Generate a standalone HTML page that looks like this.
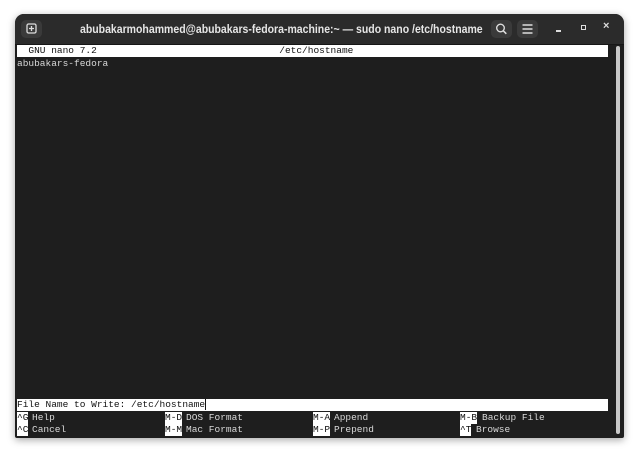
<!DOCTYPE html>
<html><head><style>
html,body{margin:0;padding:0;width:640px;height:456px;background:#fff;overflow:hidden;font-family:"Liberation Sans",sans-serif}
.win{position:absolute;left:15px;top:14px;width:609px;height:424px;border-radius:9px 9px 2px 2px;background:#1e1e1e;box-shadow:0 2px 8px rgba(0,0,0,.35);overflow:hidden}
.hdr{position:absolute;left:0;top:0;width:609px;height:30px;background:#2b2b2b;border-bottom:1px solid #161616}
.title{position:absolute;left:65px;top:8px;white-space:nowrap;color:#e6e6e6;font-weight:bold;font-size:12px;transform:scaleX(0.875);transform-origin:0 0}
.btn{position:absolute;top:6px;width:21px;height:18px;background:#3a3a3a;border-radius:5px}
.t{position:absolute;font-family:"Liberation Mono",monospace;font-size:9.5px;line-height:12px;white-space:pre;color:#d8d8d8}
.wbar{position:absolute;background:#fff;color:#111}
.k{position:absolute;background:#fff;color:#111;font-family:"Liberation Mono",monospace;font-size:9.5px;line-height:12px;white-space:pre}
</style></head><body>
<div class="win">
 <div class="hdr">
  <div class="btn" style="left:6px"><svg width="21" height="18"><rect x="6" y="4" width="9" height="9" rx="1.5" fill="none" stroke="#ddd" stroke-width="1.3"/><path d="M10.5 6v5M8 8.5h5" stroke="#ddd" stroke-width="1.3"/></svg></div>
  <div class="title">abubakarmohammed@abubakars-fedora-machine:~ — sudo nano /etc/hostname</div>
  <div class="btn" style="left:476px"><svg width="21" height="18"><circle cx="9.5" cy="8" r="3.8" fill="none" stroke="#ddd" stroke-width="1.4"/><path d="M12.3 10.8l3 3" stroke="#ddd" stroke-width="1.5"/></svg></div>
  <div class="btn" style="left:502px"><svg width="21" height="18"><path d="M5.5 5h10M5.5 9h10M5.5 13h10" stroke="#ddd" stroke-width="1.4"/></svg></div>
  <div style="position:absolute;left:541px;top:16px;width:5px;height:2px;background:#ddd"></div>
  <div style="position:absolute;left:566px;top:11px;width:3px;height:3px;border:1.5px solid #ddd"></div>
  <div style="position:absolute;left:588px;top:6px;color:#ddd;font-size:11px;font-weight:bold">×</div>
 </div>
 <div class="t wbar" style="left:2px;top:31px;width:591px;height:12px">  GNU nano 7.2                                /etc/hostname</div>
 <div class="t" style="left:2px;top:44px">abubakars-fedora</div>
 <div class="t wbar" style="left:2px;top:385px;width:591px;height:12px">File Name to Write: /etc/hostname<span style="border-left:1px solid #111"> </span></div>
 <div style="position:absolute;left:601px;top:32px;width:4px;height:388px;border-radius:2px;background:#c8c8c8"></div>

 <span class="k" style="left:2px;top:398px">^G</span><span class="t" style="left:17px;top:398px">Help</span>
 <span class="k" style="left:150px;top:398px">M-D</span><span class="t" style="left:171px;top:398px">DOS Format</span>
 <span class="k" style="left:298px;top:398px">M-A</span><span class="t" style="left:319px;top:398px">Append</span>
 <span class="k" style="left:445px;top:398px">M-B</span><span class="t" style="left:467px;top:398px">Backup File</span>
 <span class="k" style="left:2px;top:410px">^C</span><span class="t" style="left:17px;top:410px">Cancel</span>
 <span class="k" style="left:150px;top:410px">M-M</span><span class="t" style="left:171px;top:410px">Mac Format</span>
 <span class="k" style="left:298px;top:410px">M-P</span><span class="t" style="left:319px;top:410px">Prepend</span>
 <span class="k" style="left:445px;top:410px">^T</span><span class="t" style="left:461px;top:410px">Browse</span>
</div>
</body></html>
